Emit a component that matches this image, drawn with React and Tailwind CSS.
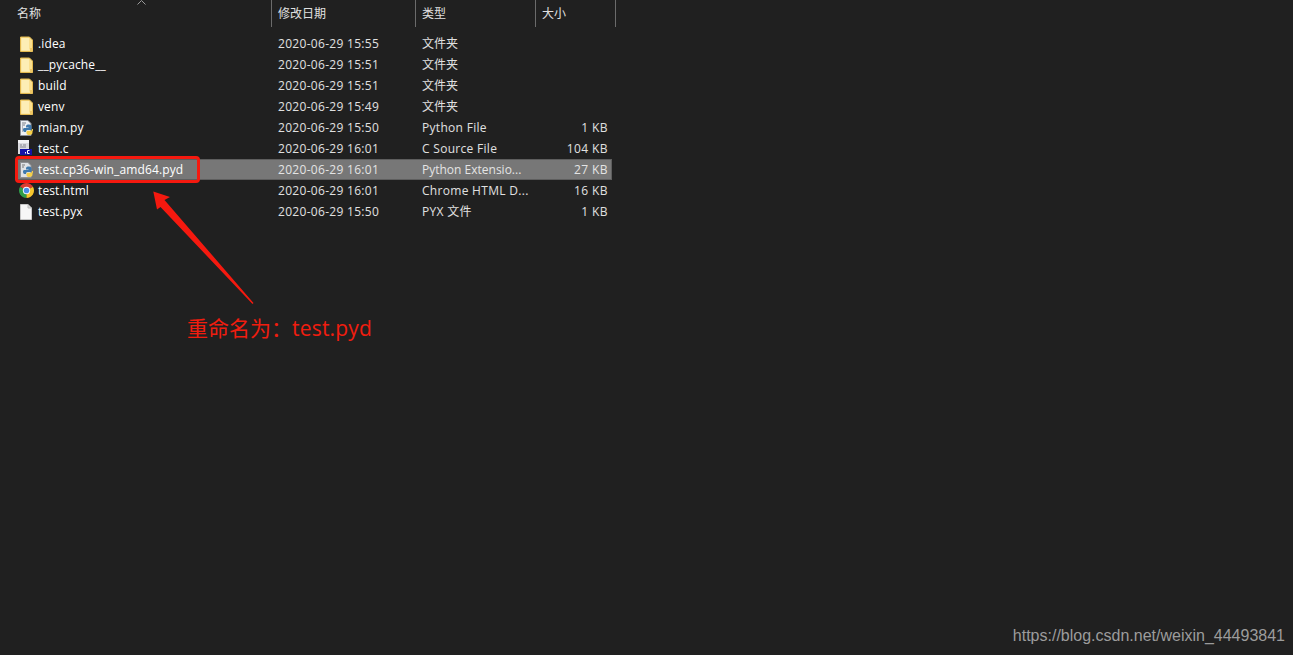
import React from "react";

const font = { fontFamily: '"Open Sans", "Noto Sans CJK SC", sans-serif' };

const FolderIcon = () => (
  <svg width="16" height="16" viewBox="0 0 16 16">
    <path d="M2.5 1H11.5L14.5 4V15.5H2.5Z" fill="#fbe08f" stroke="#e3b94f" strokeWidth="1" />
    <path d="M3.5 2H11V13.5H13.5V14.5H3.5Z" fill="#fdeeb5" />
    <path d="M12 12H14.5V15.5H12Z" fill="#eec766" />
  </svg>
);

const PythonShapes = () => (
  <>
    <path d="M8 6.5C8 5 9 4.5 11 4.5C13 4.5 13.5 5.5 13.5 6.5V8.5C13.5 9.5 13 10 12 10H9.5C8.5 10 8 10.8 8 11.5V12H6.5C5.5 12 5 11 5 9.8C5 8.5 5.5 8 6.5 8H10.5V7.5H8Z" fill="#3f79ad" />
    <path d="M15 9C15 10.5 15 11 14.5 11.5V12.5C14.5 14 13.5 15 11.5 15C9.5 15 8.5 14.5 8.5 13V11.8C8.5 11 9 10.8 10 10.8H12.5C13.5 10.8 14 10 14 9Z" fill="#f4cf4a" />
  </>
);

const PyIcon = () => (
  <svg width="16" height="16" viewBox="0 0 16 16">
    <path d="M2.5 .5H10L13 3.5V15.5H2.5Z" fill="#eef1f5" stroke="#8b8f96" strokeWidth="1" />
    <path d="M4 3H8M4 5H7M4 7H5M4 9H5M4 11H5" stroke="#7a7f88" strokeWidth="1" />
    <PythonShapes />
  </svg>
);

const PydIcon = () => (
  <svg width="16" height="16" viewBox="0 0 16 16">
    <path d="M2.5 .5H10L13 3.5V15.5H2.5Z" fill="#dfe2e6" stroke="#8e9094" strokeWidth="1" />
    <path d="M4 3H7M4 5H6" stroke="#777" strokeWidth="1" />
    <PythonShapes />
  </svg>
);

const CIcon = () => (
  <svg width="16" height="18" viewBox="0 0 16 18" className="-ml-[1px] -mt-[2px]">
    <path d="M1 1H12V15H1Z" fill="#d9d9de" />
    <path d="M1 1H12V4H1Z" fill="#f2f2f4" />
    <path d="M3 6H5M6 6H9M3 8H9" stroke="#85858f" strokeWidth="1" />
    <rect x="3" y="10" width="12" height="6" fill="#1212a8" />
    <path d="M12.5 11.5H10.5V14.5H12.5" fill="none" stroke="#fff" strokeWidth="1" />
    <rect x="8" y="13" width="1" height="1.5" fill="#fff" />
  </svg>
);

const ChromeIcon = () => (
  <svg width="15" height="15" viewBox="0 0 16 16" className="ml-[1px]">
    <path d="M8 8L1.1 4A8 8 0 0 1 14.9 4Z" fill="#d93d31" />
    <path d="M8 8L1.1 4A8 8 0 0 0 8 16Z" fill="#2f9e4a" />
    <path d="M8 8L14.9 4A8 8 0 0 1 8 16Z" fill="#f6c62e" />
    <circle cx="8" cy="8" r="3.9" fill="#fff" />
    <circle cx="8" cy="8" r="3" fill="#4a8ee8" />
  </svg>
);

const BlankIcon = () => (
  <svg width="16" height="16" viewBox="0 0 16 16">
    <path d="M2.5 .5H10L13.5 4V15.5H2.5Z" fill="#f7f7f7" stroke="#c8c8c8" strokeWidth="1" />
    <path d="M10 .5V4H13.5" fill="#d8d8d8" stroke="#bdbdbd" strokeWidth="1" />
  </svg>
);

const rows = [
  { name: ".idea", date: "2020-06-29 15:55", type: "文件夹", size: "", icon: <FolderIcon /> },
  { name: "__pycache__", date: "2020-06-29 15:51", type: "文件夹", size: "", icon: <FolderIcon /> },
  { name: "build", date: "2020-06-29 15:51", type: "文件夹", size: "", icon: <FolderIcon /> },
  { name: "venv", date: "2020-06-29 15:49", type: "文件夹", size: "", icon: <FolderIcon /> },
  { name: "mian.py", date: "2020-06-29 15:50", type: "Python File", size: "1 KB", icon: <PyIcon /> },
  { name: "test.c", date: "2020-06-29 16:01", type: "C Source File", size: "104 KB", icon: <CIcon /> },
  { name: "test.cp36-win_amd64.pyd", date: "2020-06-29 16:01", type: "Python Extensio...", size: "27 KB", icon: <PydIcon />, selected: true },
  { name: "test.html", date: "2020-06-29 16:01", type: "Chrome HTML D...", size: "16 KB", icon: <ChromeIcon /> },
  { name: "test.pyx", date: "2020-06-29 15:50", type: "PYX 文件", size: "1 KB", icon: <BlankIcon /> },
];

const HeaderCell = ({ label, width }) => (
  <div className={`${width} h-[27px] border-r border-[#6b6b6b] pl-[6px] flex items-center text-[12px] text-[#e0e0e0]`}>
    {label}
  </div>
);

export default function App() {
  return (
    <div className="relative w-[1293px] h-[655px] overflow-hidden bg-[#202020]" style={font}>
      {/* column headers */}
      <div className="flex">
        <div className="relative w-[272px] h-[27px] border-r border-[#6b6b6b] pl-[17px] flex items-center text-[12px] text-[#e0e0e0]">
          名称
          <svg className="absolute left-[137px] top-0" width="9" height="5" viewBox="0 0 9 5">
            <path d="M.5 4.5L4.5 .5L8.5 4.5" fill="none" stroke="#9a9a9a" strokeWidth="1" />
          </svg>
        </div>
        <HeaderCell label="修改日期" width="w-[144px]" />
        <HeaderCell label="类型" width="w-[120px]" />
        <HeaderCell label="大小" width="w-[80px]" />
      </div>

      {/* file rows */}
      <div className="ml-[15px] mt-[6px] w-[597px] flex flex-col">
        {rows.map((row) => (
          <div
            key={row.name}
            className={`flex items-center h-[21px] text-[12px] ${row.selected ? "bg-[#777777] shadow-[inset_0_0_0_1px_#5e5e5e] text-[#e4e4e4]" : "text-[#e0e0e0]"}`}
          >
            <div className="w-[257px] flex items-center">
              <div className="w-[23px] pl-[3px] flex items-center justify-start shrink-0">{row.icon}</div>
              <span className="text-white tracking-[0.12px]">{row.name}</span>
            </div>
            <div className="w-[144px] pl-[6px] tracking-[0.3px]">{row.date}</div>
            <div className={`w-[120px] pl-[6px] ${row.size && !row.selected ? "tracking-[0.3px]" : ""}`}>{row.type}</div>
            <div className="w-[72px] text-right tracking-[0.4px]">{row.size}</div>
          </div>
        ))}
      </div>

      {/* annotation */}
      <div className="absolute left-[15px] top-[156px] w-[185px] h-[27px] border-[3px] border-[#f5190f] rounded-[4px]" />
      <svg className="absolute left-[150px] top-[188px]" width="106" height="118" viewBox="150 188 106 118">
        <path d="M153.3 191.5L170 197L164.5 200L253.5 303L252.5 304L160.5 207L157 209.5Z" fill="#f5190f" />
      </svg>
      <div className="absolute left-[187px] top-[314px] text-[21px] leading-[28px] text-[#f01d0f] whitespace-nowrap">
        重命名为：<span className="tracking-[0.2px]">test.pyd</span>
      </div>

      {/* watermark */}
      <div
        className="absolute right-[8px] top-[626px] text-[16px] leading-[20px] text-[#9c9c9c] whitespace-nowrap"
        style={{ fontFamily: '"Liberation Sans", sans-serif' }}
      >
        https://blog.csdn.net/weixin_44493841
      </div>
    </div>
  );
}
